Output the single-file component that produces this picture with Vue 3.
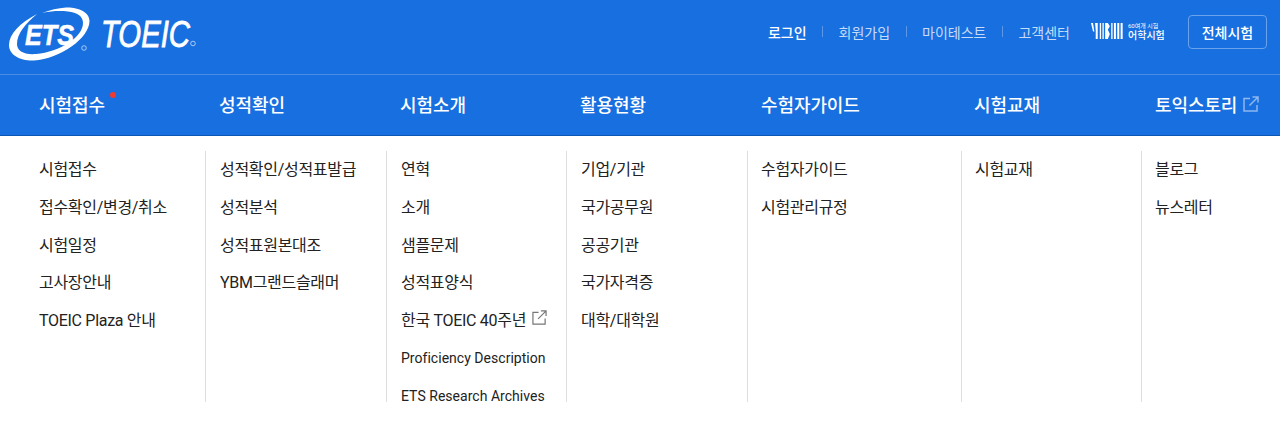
<script setup>
const topLinks = ['회원가입', '마이테스트', '고객센터']
const columns = [
  { title: '시험접수', dot: true, items: [{ t: '시험접수' }, { t: '접수확인/변경/취소' }, { t: '시험일정' }, { t: '고사장안내' }, { t: 'TOEIC Plaza 안내' }] },
  { title: '성적확인', items: [{ t: '성적확인/성적표발급' }, { t: '성적분석' }, { t: '성적표원본대조' }, { t: 'YBM그랜드슬래머' }] },
  { title: '시험소개', items: [{ t: '연혁' }, { t: '소개' }, { t: '샘플문제' }, { t: '성적표양식' }, { t: '한국 TOEIC 40주년', ext: true }, { t: 'Proficiency Description', small: true }, { t: 'ETS Research Archives', small: true }] },
  { title: '활용현황', items: [{ t: '기업/기관' }, { t: '국가공무원' }, { t: '공공기관' }, { t: '국가자격증' }, { t: '대학/대학원' }] },
  { title: '수험자가이드', items: [{ t: '수험자가이드' }, { t: '시험관리규정' }] },
  { title: '시험교재', items: [{ t: '시험교재' }] },
  { title: '토익스토리', ext: true, items: [{ t: '블로그' }, { t: '뉴스레터' }] }
]
</script>

<template>
  <div class="page">
    <header class="top">
      <svg class="logo" width="230" height="66" viewBox="0 0 230 66" role="img" aria-label="ETS TOEIC">
        <path fill="#fff" d="M37 14C20 23 9 34 9 45C9 55 20 61 34 60.500C60 59 89.500 38 89.500 21C89.500 12 78 7 66 7.500C58 8 50 10 42 13C52 11 60 10.500 68 11.500C77 12.500 83 16 83 23C83 37 60 52 36 54C24 55 17 51 17 44C17 34 25 24 37 14Z" />
        <text class="ets" x="25" y="45" textLength="49" lengthAdjust="spacingAndGlyphs">ETS</text>
        <text class="toeic" x="101" y="47" textLength="89" lengthAdjust="spacingAndGlyphs">TOEIC</text>
        <circle cx="84" cy="48" r="2.300" fill="none" stroke="#fff" stroke-opacity=".6" />
        <circle cx="193" cy="43.500" r="2.300" fill="none" stroke="#fff" stroke-opacity=".6" />
      </svg>
      <div class="util">
        <a class="login">로그인</a>
        <template v-for="link in topLinks" :key="link">
          <i class="sep"></i>
          <a class="util-link">{{ link }}</a>
        </template>
        <div class="ybm">
          <svg width="33" height="16" viewBox="0 0 49 19" preserveAspectRatio="none" role="img" aria-label="YBM">
            <path fill="#fff" d="M0 0h3l2 10H3zM6 0h4v19H7V9zM13 0h2v19h-2zM17 0h2v19h-2zM21 0h4l3 4-3 4 3 5-3 6h-4zM30 0h2v19h-2zM34 0h3v19h-3zM39 0h3v19h-3zM44 0h3v19h-3z" />
          </svg>
          <div class="ybm-text">
            <span class="ybm-top">60여개 시험</span>
            <span class="ybm-main">어학시험</span>
          </div>
        </div>
        <a class="all-btn">전체시험</a>
      </div>
    </header>

    <nav class="nav grid">
      <a v-for="col in columns" :key="col.title" class="nav-item">
        {{ col.title }}
        <i v-if="col.dot" class="dot"></i>
        <svg v-if="col.ext" class="ext-nav" width="16" height="16" viewBox="0 0 16 16" fill="none" stroke="#8fb8ef" stroke-width="1.500">
          <path d="M7 2.500H1v12.500h13V9" />
          <path d="M6.500 9.500L14.500 1.500M9.500 1h5.500v5.500" />
        </svg>
      </a>
    </nav>

    <section class="panel grid">
      <ul v-for="col in columns" :key="col.title" class="col">
        <li v-for="item in col.items" :key="item.t" :class="{ small: item.small }">
          {{ item.t }}
          <svg v-if="item.ext" class="ext-item" width="15" height="15" viewBox="0 0 16 16" fill="none" stroke="#777" stroke-width="1.300">
            <path d="M7 2.500H1v12.500h13V9" />
            <path d="M6.500 9.500L14.500 1.500M9.500 1h5.500v5.500" />
          </svg>
        </li>
      </ul>
    </section>
  </div>
</template>

<style scoped>
.page {
  width: 1280px;
  height: 423px;
  overflow: hidden;
  background: #fff;
  font-family: Roboto, "Noto Sans CJK KR", sans-serif;
  color: #222;
}
.grid {
  display: grid;
  grid-template-columns: 205px 181px 180px 181px 214px 180px 139px;
}
.top {
  height: 74px;
  display: flex;
  justify-content: space-between;
  background: #186fdf;
  border-bottom: 1px solid #4a8de6;
}
.logo {
  display: block;
}
.ets {
  font: italic 700 30px "Liberation Sans", sans-serif;
  fill: #fff;
  stroke: #fff;
  stroke-width: 0.500px;
}
.toeic {
  font: italic 400 36px "Liberation Sans", sans-serif;
  fill: #fff;
  stroke: #fff;
  stroke-width: 0.800px;
}
.util {
  display: flex;
  align-items: center;
  padding: 0 13px 11px 0;
  font-size: 14px;
  color: #c6dcf8;
}
.login {
  color: #fff;
  font-weight: 500;
}
.sep {
  width: 1px;
  height: 11px;
  margin: 0 15.500px;
  background: #5d97e8;
}
.ybm {
  display: flex;
  align-items: center;
  gap: 4px;
  margin-left: 21px;
  color: #fff;
}
.ybm svg {
  display: block;
  margin-top: -1px;
}
.ybm-text {
  display: flex;
  flex-direction: column;
  width: 37px;
}
.ybm-top {
  font-size: 6px;
  line-height: 8px;
  white-space: nowrap;
}
.ybm-main {
  font-size: 10px;
  line-height: 11px;
  font-weight: 500;
  white-space: nowrap;
}
.all-btn {
  width: 79px;
  height: 34px;
  box-sizing: border-box;
  margin-left: 23px;
  display: flex;
  align-items: center;
  justify-content: center;
  border: 1px solid #6ba2ec;
  border-radius: 4px;
  color: #fff;
  font-weight: 500;
}
.nav {
  height: 60px;
  align-items: center;
  background: #186fdf;
  border-bottom: 1px solid #0c56b5;
}
.nav-item {
  position: relative;
  padding-left: 39px;
  padding-bottom: 3px;
  color: #fff;
  font-size: 18px;
  letter-spacing: -0.100px;
  font-weight: 500;
  white-space: nowrap;
  display: flex;
  align-items: center;
}
.nav-item:not(:first-child) {
  padding-left: 14px;
}
.nav-item:nth-child(6) {
  padding-left: 13px;
}
.dot {
  position: absolute;
  left: 110px;
  top: 1px;
  width: 6px;
  height: 6px;
  border-radius: 50%;
  background: #f0392f;
}
.ext-nav {
  margin-left: 6px;
}
.panel {
  height: 251px;
  margin-top: 15px;
  overflow: hidden;
}
.col {
  margin: 0;
  padding: 0 0 0 14px;
  list-style: none;
  border-left: 1px solid #dedede;
}
.col:first-child {
  padding-left: 39px;
  border-left: 0;
}
.col:nth-child(n+5) {
  padding-left: 13px;
}
.col li {
  box-sizing: border-box;
  height: 37.700px;
  padding-bottom: 3px;
  display: flex;
  align-items: center;
  gap: 6px;
  font-size: 16px;
  letter-spacing: -0.300px;
  white-space: nowrap;
}
.col li.small {
  padding-bottom: 0;
  font-size: 14px;
  letter-spacing: 0.030px;
}
.ext-item {
  margin-top: -3px;
}
</style>
